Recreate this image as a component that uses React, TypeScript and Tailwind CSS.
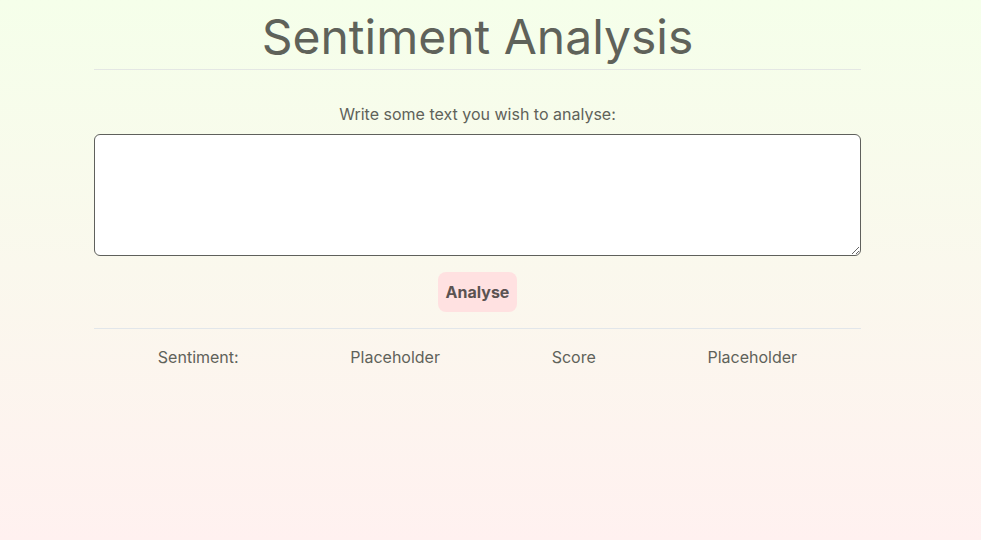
export default function App() {
  return (
    <div className="min-h-[540px] w-full bg-gradient-to-b from-[#f5ffea] to-[#fff1f0] pr-[26px] font-['Inter',sans-serif] text-[#5f625a]">
      <main className="mx-auto flex w-[767px] flex-col items-center">
        <h1 className="pt-[6px] pb-[1px] text-[48px] leading-[62px] font-normal">Sentiment Analysis</h1>
        <hr className="w-full border-t border-[#e4e7e4]" />

        <label className="mt-[34px] text-[16px] leading-[20px]">Write some text you wish to analyse:</label>
        <textarea className="mt-[10px] h-[122px] w-full rounded-[6px] border border-[#5f605c] bg-white p-2" />

        <button className="mt-[16px] h-[40px] rounded-[8px] bg-[#ffe1e1] px-[8px] text-[16px] font-bold text-[#5b5352]">
          Analyse
        </button>

        <hr className="mt-[16px] w-full border-t border-[#e2e6ea]" />

        <div className="mt-[18px] flex w-full justify-around px-2 text-[16px] leading-[20px]">
          <span>Sentiment:</span>
          <span>Placeholder</span>
          <span>Score</span>
          <span>Placeholder</span>
        </div>
      </main>
    </div>
  );
}
